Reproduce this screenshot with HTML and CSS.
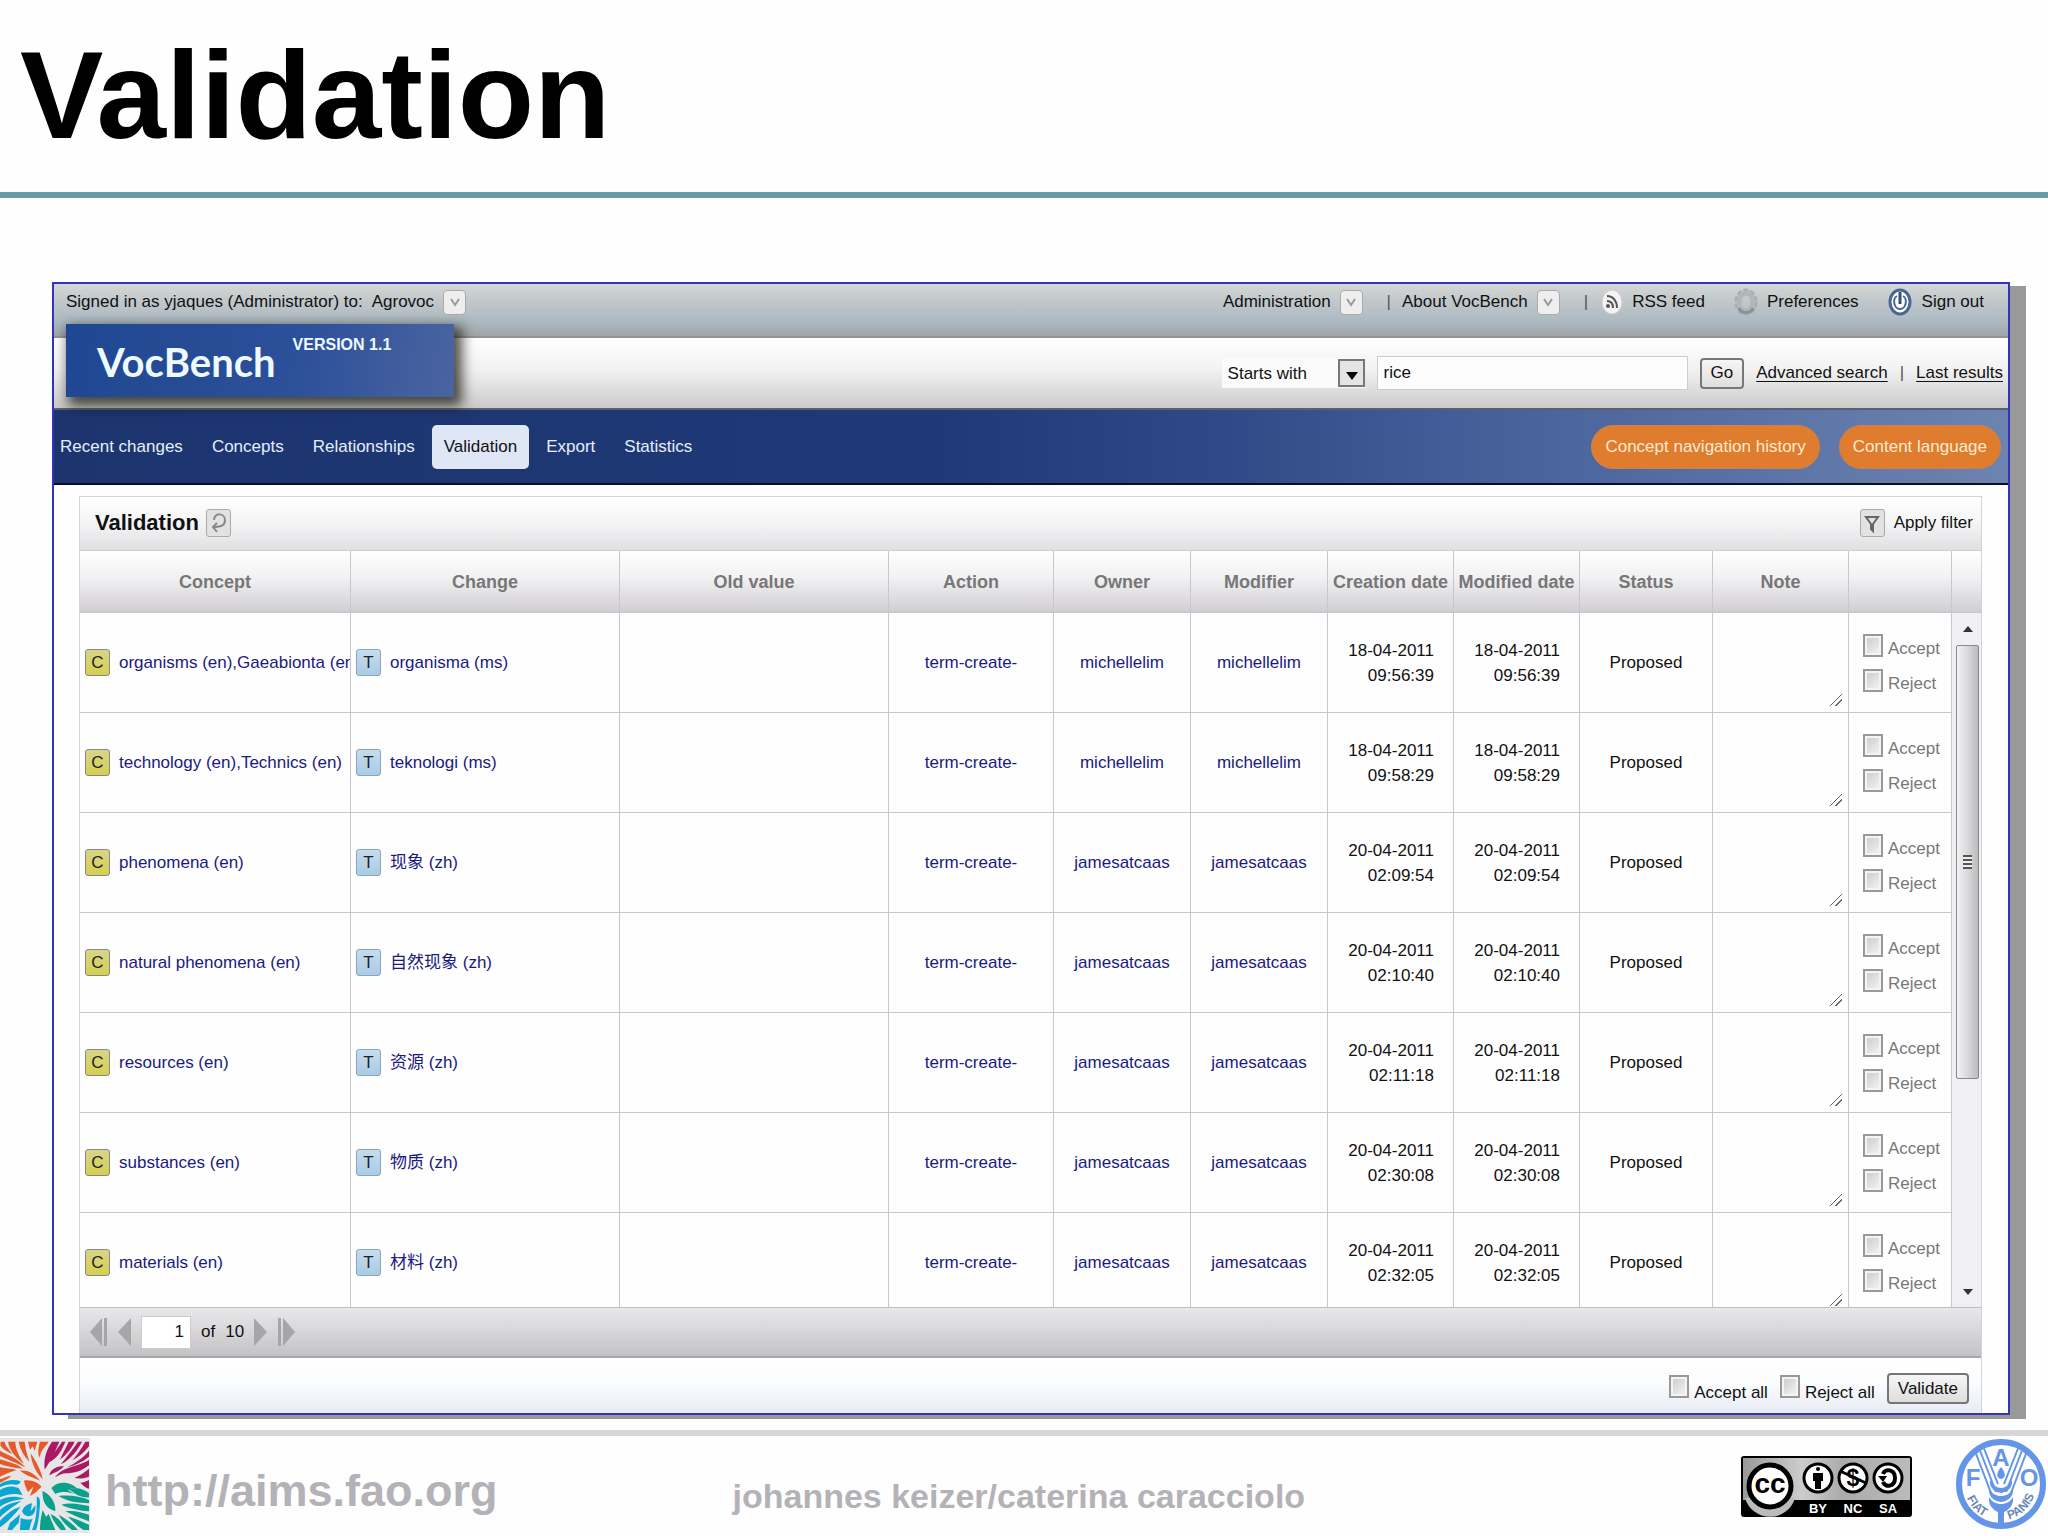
FILE: index.html
```html
<!DOCTYPE html>
<html lang="en">
<head>
    <meta charset="UTF-8">
    <meta name="viewport" content="width=device-width, initial-scale=1.0">
    <title>Validation</title>
    <link rel="stylesheet" href="styles.css">
</head>
<body>
    <header class="slide-header">
        <h1>Validation</h1>
    </header>

    <main class="window">
        <div class="topbar">
            <div class="signed-in">
                <span>Signed in as yjaques (Administrator) to:</span>
                <span>Agrovoc</span>
                <button class="chevron" aria-label="Choose ontology"><svg viewBox="0 0 10 10"><path d="M1 2l4 6 4-6"/></svg></button>
            </div>
            <div class="top-links">
                <a href="#">Administration</a>
                <button class="chevron" aria-label="Administration menu"><svg viewBox="0 0 10 10"><path d="M1 2l4 6 4-6"/></svg></button>
                <span class="sep">|</span>
                <a href="#">About VocBench</a>
                <button class="chevron" aria-label="About menu"><svg viewBox="0 0 10 10"><path d="M1 2l4 6 4-6"/></svg></button>
                <span class="sep last-sep">|</span>
                <a class="icon-link" href="#">
                    <svg width="22" height="26" viewBox="0 0 22 26">
                        <ellipse cx="11" cy="13" rx="10" ry="12" fill="#f3f3f3" stroke="#cfcfcf"/>
                        <g fill="none" stroke="#555" stroke-width="2"><path d="M6 7c6 0 10 5 10 12M6 12c4 0 6 3 6 7"/></g>
                        <circle cx="7" cy="17" r="2" fill="#555"/>
                    </svg>
                    RSS feed
                </a>
                <a class="icon-link" href="#">
                    <svg width="24" height="28" viewBox="0 0 24 28">
                        <ellipse cx="12" cy="14" rx="10" ry="12" fill="none" stroke="#a9adb0" stroke-width="3" stroke-dasharray="5 2"/>
                        <ellipse cx="12" cy="14" rx="7" ry="9" fill="none" stroke="#b4b7b9" stroke-width="5"/>
                        <path d="M5 20c2 6 12 6 14 0" fill="none" stroke="#8d9194" stroke-width="3"/>
                    </svg>
                    Preferences
                </a>
                <a class="icon-link" href="#">
                    <svg width="25" height="28" viewBox="0 0 25 28">
                        <ellipse cx="12" cy="14" rx="10" ry="12" fill="#fff" stroke="#4a6792" stroke-width="3"/>
                        <path d="M9 8C4 11 6 21 12 21S20 11 15 8" fill="none" stroke="#4a6792" stroke-width="2"/>
                        <path d="M12 4v12" stroke="#2f4f80" stroke-width="3"/>
                    </svg>
                    Sign out
                </a>
            </div>
        </div>

        <div class="search-row">
            <div class="logo"><strong>VocBench</strong><span>VERSION 1.1</span></div>
            <form class="search">
                <div class="select-box">
                    <select aria-label="Match type"><option>Starts with</option></select>
                    <span class="select-arrow"></span>
                </div>
                <input type="text" value="rice" aria-label="Search text">
                <button type="button" class="btn">Go</button>
                <a href="#">Advanced search</a>
                <span class="sep">|</span>
                <a href="#">Last results</a>
            </form>
        </div>

        <nav class="menu">
            <a href="#">Recent changes</a>
            <a href="#">Concepts</a>
            <a href="#">Relationships</a>
            <a href="#" class="active">Validation</a>
            <a href="#">Export</a>
            <a href="#">Statistics</a>
            <div class="menu-right">
                <button class="pill">Concept navigation history</button>
                <button class="pill">Content language</button>
            </div>
        </nav>

        <section class="panel">
            <div class="panel-title">
                <h2>Validation</h2>
                <button class="icon-btn" aria-label="Reload">
                    <svg width="18" height="22" viewBox="0 0 18 22"><path d="M5 8c0-8 11-7 11 0 0 5-3 7-12 7M8 11l-4 4 4 5" fill="none" stroke="#888" stroke-width="2"/></svg>
                </button>
                <div class="filter">
                    <button class="icon-btn" id="filter">
                        <svg width="18" height="22" viewBox="0 0 18 22"><path d="M3 5h12l-5 7v7l-2-2v-5z" fill="none" stroke="#666" stroke-width="2"/></svg>
                    </button>
                    <label for="filter">Apply filter</label>
                </div>
            </div>

            <div class="grid">
                <div class="table-container">
                    <table>
                        <colgroup>
                            <col class="c-concept"><col class="c-wide"><col class="c-wide">
                            <col class="c-action"><col class="c-user"><col class="c-user">
                            <col class="c-date"><col class="c-date"><col class="c-status">
                            <col class="c-note"><col class="c-check">
                        </colgroup>
                        <thead>
                            <tr>
                                <th>Concept</th>
                                <th>Change</th>
                                <th>Old value</th>
                                <th>Action</th>
                                <th>Owner</th>
                                <th>Modifier</th>
                                <th>Creation date</th>
                                <th>Modified date</th>
                                <th>Status</th>
                                <th>Note</th>
                                <th></th>
                            </tr>
                        </thead>
                        <tbody>
                            <tr>
                                <td><div class="term"><i class="tag tag-c">C</i><a href="#">organisms (en),Gaeabionta (en)</a></div></td>
                                <td><div class="term"><i class="tag tag-t">T</i><a href="#">organisma (ms)</a></div></td>
                                <td></td>
                                <td class="link">term-create-</td>
                                <td class="link">michellelim</td>
                                <td class="link">michellelim</td>
                                <td class="date">18-04-2011<br>09:56:39</td>
                                <td class="date">18-04-2011<br>09:56:39</td>
                                <td>Proposed</td>
                                <td class="note"><textarea aria-label="Note"></textarea></td>
                                <td class="checks"><label><input type="checkbox">Accept</label><label><input type="checkbox">Reject</label></td>
                            </tr>
                            <tr>
                                <td><div class="term"><i class="tag tag-c">C</i><a href="#">technology (en),Technics (en)</a></div></td>
                                <td><div class="term"><i class="tag tag-t">T</i><a href="#">teknologi (ms)</a></div></td>
                                <td></td>
                                <td class="link">term-create-</td>
                                <td class="link">michellelim</td>
                                <td class="link">michellelim</td>
                                <td class="date">18-04-2011<br>09:58:29</td>
                                <td class="date">18-04-2011<br>09:58:29</td>
                                <td>Proposed</td>
                                <td class="note"><textarea aria-label="Note"></textarea></td>
                                <td class="checks"><label><input type="checkbox">Accept</label><label><input type="checkbox">Reject</label></td>
                            </tr>
                            <tr>
                                <td><div class="term"><i class="tag tag-c">C</i><a href="#">phenomena (en)</a></div></td>
                                <td><div class="term"><i class="tag tag-t">T</i><a href="#">现象 (zh)</a></div></td>
                                <td></td>
                                <td class="link">term-create-</td>
                                <td class="link">jamesatcaas</td>
                                <td class="link">jamesatcaas</td>
                                <td class="date">20-04-2011<br>02:09:54</td>
                                <td class="date">20-04-2011<br>02:09:54</td>
                                <td>Proposed</td>
                                <td class="note"><textarea aria-label="Note"></textarea></td>
                                <td class="checks"><label><input type="checkbox">Accept</label><label><input type="checkbox">Reject</label></td>
                            </tr>
                            <tr>
                                <td><div class="term"><i class="tag tag-c">C</i><a href="#">natural phenomena (en)</a></div></td>
                                <td><div class="term"><i class="tag tag-t">T</i><a href="#">自然现象 (zh)</a></div></td>
                                <td></td>
                                <td class="link">term-create-</td>
                                <td class="link">jamesatcaas</td>
                                <td class="link">jamesatcaas</td>
                                <td class="date">20-04-2011<br>02:10:40</td>
                                <td class="date">20-04-2011<br>02:10:40</td>
                                <td>Proposed</td>
                                <td class="note"><textarea aria-label="Note"></textarea></td>
                                <td class="checks"><label><input type="checkbox">Accept</label><label><input type="checkbox">Reject</label></td>
                            </tr>
                            <tr>
                                <td><div class="term"><i class="tag tag-c">C</i><a href="#">resources (en)</a></div></td>
                                <td><div class="term"><i class="tag tag-t">T</i><a href="#">资源 (zh)</a></div></td>
                                <td></td>
                                <td class="link">term-create-</td>
                                <td class="link">jamesatcaas</td>
                                <td class="link">jamesatcaas</td>
                                <td class="date">20-04-2011<br>02:11:18</td>
                                <td class="date">20-04-2011<br>02:11:18</td>
                                <td>Proposed</td>
                                <td class="note"><textarea aria-label="Note"></textarea></td>
                                <td class="checks"><label><input type="checkbox">Accept</label><label><input type="checkbox">Reject</label></td>
                            </tr>
                            <tr>
                                <td><div class="term"><i class="tag tag-c">C</i><a href="#">substances (en)</a></div></td>
                                <td><div class="term"><i class="tag tag-t">T</i><a href="#">物质 (zh)</a></div></td>
                                <td></td>
                                <td class="link">term-create-</td>
                                <td class="link">jamesatcaas</td>
                                <td class="link">jamesatcaas</td>
                                <td class="date">20-04-2011<br>02:30:08</td>
                                <td class="date">20-04-2011<br>02:30:08</td>
                                <td>Proposed</td>
                                <td class="note"><textarea aria-label="Note"></textarea></td>
                                <td class="checks"><label><input type="checkbox">Accept</label><label><input type="checkbox">Reject</label></td>
                            </tr>
                            <tr>
                                <td><div class="term"><i class="tag tag-c">C</i><a href="#">materials (en)</a></div></td>
                                <td><div class="term"><i class="tag tag-t">T</i><a href="#">材料 (zh)</a></div></td>
                                <td></td>
                                <td class="link">term-create-</td>
                                <td class="link">jamesatcaas</td>
                                <td class="link">jamesatcaas</td>
                                <td class="date">20-04-2011<br>02:32:05</td>
                                <td class="date">20-04-2011<br>02:32:05</td>
                                <td>Proposed</td>
                                <td class="note"><textarea aria-label="Note"></textarea></td>
                                <td class="checks"><label><input type="checkbox">Accept</label><label><input type="checkbox">Reject</label></td>
                            </tr>
                        </tbody>
                    </table>
                </div>
                <div class="scroll">
                    <div class="scroll-head"></div>
                    <div class="track">
                        <span class="arrow-up"></span>
                        <div class="thumb"><span class="grip"></span></div>
                        <span class="arrow-down"></span>
                    </div>
                </div>
            </div>

            <div class="pager">
                <button aria-label="First page"><svg width="18" height="28" viewBox="0 0 18 28"><path d="M12 0v28L0 14zM14 0h3v28h-3z"/></svg></button>
                <button aria-label="Previous page"><svg width="13" height="28" viewBox="0 0 13 28"><path d="M13 0v28L0 14z"/></svg></button>
                <input type="text" value="1" aria-label="Page">
                <span class="of"><span>of</span><span>10</span></span>
                <button aria-label="Next page"><svg width="13" height="28" viewBox="0 0 13 28"><path d="M0 0v28l13-14z"/></svg></button>
                <button aria-label="Last page"><svg width="18" height="28" viewBox="0 0 18 28"><path d="M6 0v28l12-14zM1 0h3v28H1z"/></svg></button>
            </div>

            <div class="actions">
                <label><input type="checkbox">Accept all</label>
                <label><input type="checkbox">Reject all</label>
                <button class="btn">Validate</button>
            </div>
        </section>
    </main>

    <footer class="slide-footer">
        <svg class="aims" viewBox="0 24 270 285" aria-label="AIMS">
            <path fill="#e6e6e6" d="M0 24h270v285H0z"/>
            <g fill="#e8592a">
                <path d="M2 35h12c2 14 16 26 24 38C22 66 6 56 1 46z"/>
                <path d="M24 35h22c0 22 12 44 26 66C50 86 28 62 24 35z"/>
                <path d="M56 35h18l4 26 10 34C70 76 60 56 56 35z"/>
                <path d="M84 35h28l-8 28-6-14-8 10z"/>
                <path d="M120 35h26c-8 14-22 22-28 48-6-16-2-34 2-48z"/>
                <path d="M92 70c10 16 30 44 36 78-18-18-34-46-36-78z"/>
                <path d="M0 62c24 14 54 22 76 50C48 98 20 88 0 78z"/>
                <path d="M0 88c28 8 52 14 68 28-24-2-48-6-68-14z"/>
                <path d="M0 112c20 4 34 4 50 8-18 6-34 12-50 20z"/>
                <path d="M60 122c24-4 46 10 60 30-20-10-40-14-60-30zM0 148c12-4 22-10 34-10-10 8-20 14-34 20z"/>
                <path d="M72 152c20-4 44 6 52 18-10 12-22 22-34 28l10-28-16 16c-6-12-10-22-12-34z"/>
            </g>
            <g fill="#aa1a63">
                <path d="M156 35h22l-14 32 22-32h10c-10 24-20 46-48 62l-14 22c-4-36 6-60 22-84z"/>
                <path d="M206 35h18c-10 22-22 36-44 54 8-20 18-36 26-54z"/>
                <path d="M234 35h12c-12 24-34 54-64 68 16-20 36-44 52-68z"/>
                <path d="M256 35h11v14c-14 18-30 32-50 42 16-18 26-34 39-56z"/>
                <path d="M148 136c4-20 24-28 44-28-10 14-26 18-44 28z"/>
                <path d="M267 62v18c-20 16-42 26-66 32 24-12 48-28 66-50z"/>
                <path d="M267 90v16c-24 18-44 24-68 24-12 0-22 6-34 12 24-34 66-30 102-52z"/>
                <path d="M267 116v24c-16 6-28 6-44 4 16-8 30-16 44-28z"/>
                <path d="M267 150v26c-10-2-18-10-26-18 10 0 18-4 26-8z"/>
            </g>
            <g fill="#08a6d0">
                <path d="M0 162c20-12 42-16 62-8-2 8-8 10-14 10-16-4-32 0-48 8z"/>
                <path d="M0 180c18-12 36-14 56-6 6 10 8 16 12 22-24-8-46-4-68 6z"/>
                <path d="M0 210c24-12 48-12 72-4-20 4-48 6-72 24z"/>
                <path d="M0 240c18-16 40-24 64-26-20 12-40 26-64 48z"/>
                <path d="M0 272c20-20 38-36 62-42-18 24-40 46-62 62z"/>
                <path d="M30 278c10-8 20-16 30-26l-4 26-20 22H22z"/>
                <path d="M66 244c6-16 18-22 30-24l-4 24 14-18c2 16-4 30-16 32-12 2-20-4-24-14z"/>
                <path d="M62 264c16 6 28 6 36 2-6 14-8 22-10 34H60z"/>
                <path d="M110 200c8 0 10 8 10 20-2 34-4 56-12 80H96c12-28 16-60 14-100z"/>
            </g>
            <g fill="#0aa08c">
                <path d="M154 174c20-24 60-20 80 4-14-4-22-2-30 2l18 12c-22-8-38-8-56 0z"/>
                <path d="M128 182c22 12 40 34 38 62-28-10-40-28-38-62z"/>
                <path d="M206 178c24-8 46-2 61 12v12c-24 2-42-10-61-24z"/>
                <path d="M176 198c34-4 66 2 91 12v10c-34-2-64-4-91-22z"/>
                <path d="M184 224c30-8 60 0 83 4v16c-32-4-60-8-83-20z"/>
                <path d="M196 244c28-4 50 4 71 10v20c-24-8-48-18-71-30z"/>
                <path d="M204 260c26 6 44 16 63 24v16h-16c-18-10-32-26-47-40z"/>
                <path d="M176 254c22 12 44 28 58 46h-18c-14-10-28-24-40-46z"/>
                <path d="M120 300c0-28 4-44 8-60l10 20 8-8 20 48z"/>
                <path d="M152 252c22 10 36 26 46 48h-16c-12-14-24-28-30-48z"/>
            </g>
        </svg>
        <a class="site" href="#">http://aims.fao.org</a>
        <p class="authors">johannes keizer/caterina caracciolo</p>
        <svg class="cc" viewBox="0 0 171 61" aria-label="Creative Commons BY NC SA">
            <defs>
                <linearGradient id="ccbg" x1="0" x2="1"><stop offset="0" stop-color="#999"/><stop offset=".35" stop-color="#ccc"/><stop offset=".6" stop-color="#aaa"/><stop offset="1" stop-color="#bbb"/></linearGradient>
            </defs>
            <rect width="171" height="61" rx="3" fill="#000"/>
            <path d="M2 2h167v42H2z" fill="url(#ccbg)"/>
            <path d="M4 42a26 26 0 0 0 50 0z" fill="#bbb"/>
            <circle cx="29" cy="30" r="21" fill="#fff" stroke="#000" stroke-width="5"/>
            <text class="cc-letters" x="29" y="37" text-anchor="middle">cc</text>
            <g fill="#fff" stroke="#000" stroke-width="3">
                <circle cx="77" cy="22" r="14"/>
                <circle cx="112" cy="22" r="14"/>
                <circle cx="147" cy="22" r="14"/>
            </g>
            <circle cx="77" cy="13" r="2"/>
            <path d="M72 17h10v8h-2v8h-6v-8h-2z"/>
            <text class="cc-sign" x="112" y="30" text-anchor="middle">$</text>
            <path d="M99 15l26 12" stroke="#000" stroke-width="3"/>
            <path d="M142 18c2-6 12-5 12 4s-10 10-12 4" fill="none" stroke="#000" stroke-width="4"/>
            <path d="M137 20h9l-4 6z"/>
            <g class="cc-label">
                <text x="77" y="57" text-anchor="middle">BY</text>
                <text x="112" y="57" text-anchor="middle">NC</text>
                <text x="147" y="57" text-anchor="middle">SA</text>
            </g>
        </svg>
        <svg class="fao" viewBox="0 0 92 92" aria-label="FAO Fiat Panis">
            <circle cx="46" cy="46" r="42" fill="#fff" stroke="#6495e8" stroke-width="6"/>
            <g fill="none" stroke="#6495e8" stroke-width="2">
                <path d="M20 13l16 42M24 10l17 44M28 8l15 38M72 13L56 55M68 10L51 54M64 8L49 46"/>
            </g>
            <path fill="#6495e8" d="M46 29c5 6 5 11 0 12-5-1-5-6 0-12z"/>
            <path fill="#6495e8" d="M35 42c3 5 7 8 11 8s8-3 11-8c1 7-4 12-11 13-7-1-12-6-11-13zM34 50c3 6 7 8 12 8s9-2 12-8c1 8-4 13-12 14-8-1-13-6-12-14zM34 59c3 5 7 7 12 7s9-2 12-7c1 8-4 13-9 15v15h-6V74c-5-2-10-7-9-15z"/>
            <g class="fao-letters">
                <text x="18" y="48" text-anchor="middle">F</text>
                <text x="46" y="28" text-anchor="middle">A</text>
                <text x="74" y="48" text-anchor="middle">O</text>
            </g>
            <path id="motto-left" d="M12 60a36 36 0 0 0 29 22" fill="none"/>
            <path id="motto-right" d="M54 81a36 36 0 0 0 27-35" fill="none"/>
            <g class="fao-motto">
                <text><textPath href="#motto-left">FIAT</textPath></text>
                <text><textPath href="#motto-right">PANIS</textPath></text>
            </g>
        </svg>
    </footer>
</body>
</html>
```
FILE: styles.css
```css
* {
    box-sizing: border-box;
}

body {
    margin: 0;
    background: #fefefe;
    font-family: "Liberation Sans", Arial, "Noto Sans CJK SC", sans-serif;
    font-size: 17px;
    color: #111;
}

a {
    color: inherit;
    text-decoration: none;
}

button, input, select, textarea {
    font: inherit;
    color: inherit;
    margin: 0;
}

button {
    cursor: pointer;
}

.slide-header {
    border-bottom: 6px solid #6a9ca8;
    padding: 0 20px 2px;
}

.slide-header h1 {
    margin: 0;
    font-size: 125px;
    line-height: 190px;
    color: #000;
}

/* application window */
.window {
    margin: 84px 38px 0 52px;
    border: 2px solid #3333bb;
    box-shadow: 16px 4px 0 #999;
    background: #fefefe;
}

.topbar {
    display: flex;
    justify-content: space-between;
    height: 54px;
    padding: 0 24px 16px 12px;
    background: linear-gradient(#d4d7d7, #c3c9cb 30%, #adbac2 70%, #a0a6a8);
    border-bottom: 2px solid #8e9496;
}

.signed-in, .top-links, .icon-link {
    display: flex;
    align-items: center;
    gap: 9px;
}

.chevron {
    display: flex;
    align-items: center;
    justify-content: center;
    width: 23px;
    height: 25px;
    padding: 0;
    border: 1px solid #aaa;
    border-radius: 4px;
    background: #eee;
}

.chevron svg {
    width: 10px;
    height: 10px;
    fill: none;
    stroke: #999;
    stroke-width: 2;
}

.sep {
    color: #555;
}

.top-links .sep {
    margin: 0 2px 0 15px;
}

.top-links .last-sep {
    margin-right: 4px;
}

.icon-link + .icon-link {
    margin-left: 20px;
}

.search-row {
    position: relative;
    display: flex;
    justify-content: flex-end;
    align-items: center;
    height: 70px;
    padding-right: 5px;
    background: linear-gradient(#fff, #f2f2f2 45%, #cbcbcb);
}

.logo {
    position: absolute;
    left: 12px;
    top: -14px;
    display: flex;
    gap: 17px;
    width: 388px;
    height: 73px;
    padding-left: 31px;
    background: linear-gradient(100deg, #1f4791, #2d509a 60%, #4a64a0);
    box-shadow: 5px 6px 12px 3px rgba(20, 20, 10, 0.75);
    color: #eefaff;
}

.logo strong {
    font-family: Lato, sans-serif;
    font-size: 40px;
    line-height: 76px;
}

.logo span {
    font-size: 16px;
    font-weight: bold;
    line-height: 42px;
}

.search {
    display: flex;
    align-items: center;
    gap: 12px;
}

.search a {
    text-decoration: underline;
    text-underline-offset: 3px;
}

.select-box {
    position: relative;
    width: 143px;
}

.select-box select {
    appearance: none;
    width: 100%;
    height: 30px;
    padding: 0 6px;
    border: 0;
    border-radius: 0;
    background: #fbfbfb;
}

.select-arrow {
    position: absolute;
    right: 0;
    top: 1px;
    width: 27px;
    height: 28px;
    border: 2px solid #777;
    background: #e4e4e4;
    pointer-events: none;
}

.select-arrow::after {
    content: "";
    position: absolute;
    left: 6px;
    top: 11px;
    border: 6px solid transparent;
    border-top: 8px solid #000;
    border-bottom: 0;
}

.search input {
    width: 311px;
    height: 34px;
    padding: 0 6px;
    border: 1px solid #ccc;
    background: #fcfcfc;
}

.btn {
    height: 31px;
    padding: 0 9px;
    border: 2px solid #777;
    border-radius: 4px;
    background: linear-gradient(#f6f6f6, #dedede);
}

.menu {
    display: flex;
    align-items: center;
    gap: 5px;
    height: 77px;
    padding: 1px 7px 0 6px;
    background: linear-gradient(90deg, #1c356f 0, #1f3977 45%, #2f4a86 60%, #48639c 75%, #6d83b0 100%);
    border-top: 2px solid #5a6070;
    border-bottom: 2px solid #0c0c28;
    color: #e6eefa;
}

.menu a {
    padding: 0 12px;
    line-height: 44px;
    border-radius: 5px;
}

.menu a:first-child {
    padding-left: 0;
}

.menu a.active {
    background: #dfe6f6;
    color: #111;
}

.menu-right {
    display: flex;
    gap: 19px;
    margin-left: auto;
}

.pill {
    height: 44px;
    padding: 0 13px;
    border: 1px solid #c98250;
    border-radius: 22px;
    background: #e07c2e;
    color: #fdebcf;
}

/* validation panel */
.panel {
    margin: 11px 26px 0 25px;
    border: 1px solid #d3d3d8;
    border-bottom: 0;
}

.panel-title {
    display: flex;
    align-items: center;
    gap: 7px;
    height: 54px;
    padding: 0 8px 2px 15px;
    border-bottom: 1px solid #d0d0d4;
    background: linear-gradient(#fff, #f4f4f5 50%, #e0dfe2);
}

.panel-title h2 {
    margin: 0;
    font-size: 22px;
}

.icon-btn {
    display: flex;
    align-items: center;
    justify-content: center;
    width: 25px;
    height: 28px;
    padding: 0;
    border: 1px solid #aaa;
    border-radius: 3px;
    background: #e2e2e2;
}

.filter {
    display: flex;
    align-items: center;
    gap: 9px;
    margin-left: auto;
}

/* the last row runs on under the pager */
.grid {
    display: flex;
    height: 756px;
    overflow: hidden;
}

.table-container {
    flex: 1;
}

table {
    width: 100%;
    table-layout: fixed;
    border-collapse: separate;
    border-spacing: 0;
}

.c-concept { width: 271px; }
.c-wide { width: 269px; }
.c-action { width: 165px; }
.c-user { width: 137px; }
.c-date { width: 126px; }
.c-status { width: 133px; }
.c-note { width: 136px; }
.c-check { width: 103px; }

th, td {
    padding: 0;
    border-right: 1px solid #c9c6cd;
    border-bottom: 1px solid #c9c6cd;
    text-align: center;
    overflow: hidden;
    white-space: nowrap;
}

th {
    height: 62px;
    padding-top: 2px;
    font-size: 18px;
    color: #777;
    background: linear-gradient(#fff, #f1f0f2 45%, #d0ced2);
}

td {
    height: 100px;
}

.term {
    display: flex;
    align-items: center;
    gap: 9px;
    padding-left: 5px;
    line-height: 20px;
    color: #1a1a80;
}

.tag {
    flex: none;
    width: 25px;
    height: 27px;
    border: 1px solid #888;
    border-radius: 3px;
    font-style: normal;
    line-height: 26px;
    text-align: center;
    color: #222;
}

.tag-c {
    background: linear-gradient(#d8d48a, #d5d04e);
}

.tag-t {
    background: linear-gradient(#c6dcec, #a9cbe6);
    border-color: #8aa4b8;
}

.link {
    color: #1a1a80;
}

td.date {
    padding-right: 19px;
    text-align: right;
    line-height: 25px;
}

td.note {
    padding-right: 6px;
}

.note textarea {
    display: block;
    width: 100%;
    height: 86px;
    border: 0;
    background: transparent;
    resize: both;
}

.note textarea::-webkit-resizer {
    background: linear-gradient(135deg, transparent 46%, #666 46%, #666 53%, transparent 53%, transparent 70%, #666 70%, #666 77%, transparent 77%) right bottom / 12px 12px no-repeat;
}

input[type="checkbox"] {
    appearance: none;
    width: 20px;
    height: 23px;
    border: 2px solid #999;
    background: linear-gradient(135deg, #c9c9c9, #f6f6f6);
    box-shadow: inset 0 0 0 2px #f4f4f4;
}

.checks label {
    display: flex;
    align-items: flex-start;
    gap: 5px;
    height: 35px;
    padding: 6px 0 0 14px;
    line-height: 30px;
    color: #777;
}

.scroll {
    flex: none;
    display: flex;
    flex-direction: column;
    width: 31px;
}

.scroll-head {
    height: 62px;
    border-bottom: 1px solid #c9c6cd;
    background: linear-gradient(#fff, #f1f0f2 45%, #d0ced2);
}

.track {
    flex: 1;
    display: flex;
    flex-direction: column;
    align-items: center;
    padding: 13px 0 12px;
    background: #f0eff2;
}

.arrow-up, .arrow-down {
    border: 5px solid transparent;
}

.arrow-up {
    border-top: 0;
    border-bottom: 6px solid #333;
}

.arrow-down {
    margin-top: auto;
    border-bottom: 0;
    border-top: 6px solid #333;
}

.thumb {
    display: flex;
    align-items: center;
    justify-content: center;
    width: 23px;
    height: 434px;
    margin-top: 13px;
    border: 1px solid #888;
    border-radius: 2px;
    background: linear-gradient(90deg, #f2f2f4, #d4d4d8 60%, #bbb);
}

.grip {
    width: 9px;
    height: 14px;
    background: repeating-linear-gradient(#555 0, #555 2px, #eee 2px, #eee 4px);
}

.pager {
    display: flex;
    align-items: center;
    gap: 10px;
    height: 51px;
    padding: 0 10px;
    border-top: 1px solid #bfbdc2;
    border-bottom: 2px solid #a8a6aa;
    background: linear-gradient(#e8e7ea, #dad9dc 40%, #c4c2c5);
}

.pager button {
    display: flex;
    padding: 0;
    border: 0;
    background: none;
    fill: #a6a6a8;
}

.pager input {
    width: 50px;
    height: 33px;
    padding: 0 6px;
    border: 1px solid #ccc;
    background: #fff;
    text-align: right;
}

.pager .of {
    display: flex;
    gap: 10px;
}

.actions {
    display: flex;
    align-items: center;
    justify-content: flex-end;
    gap: 12px;
    height: 55px;
    padding: 6px 12px 0;
    background: linear-gradient(#fff, #fbfcfe 45%, #e8ebf5);
}

.actions label {
    display: flex;
    align-items: baseline;
    gap: 5px;
}

/* slide footer */
.slide-footer {
    display: flex;
    align-items: flex-start;
    margin-top: 15px;
    border-top: 6px solid #d6d6d6;
    padding-top: 2px;
    font-weight: bold;
    color: #b3b2b6;
}

.aims {
    width: 90px;
    height: 95px;
}

.site {
    margin-left: 15px;
    font-size: 45px;
    line-height: 106px;
}

.authors {
    margin: 0 auto 0 235px;
    font-size: 34px;
    line-height: 116px;
}

.cc {
    width: 171px;
    height: 61px;
    margin: 18px 43px 0 0;
}

.cc-letters {
    font-size: 28px;
    font-weight: bold;
    fill: #000;
}

.cc-sign {
    font-size: 23px;
    fill: #000;
}

.cc-label {
    font-size: 13px;
    fill: #fff;
}

.fao {
    width: 92px;
    height: 92px;
    margin-right: 1px;
}

.fao-letters {
    font-size: 24px;
    fill: #6495e8;
}

.fao-motto {
    font-size: 12px;
    fill: #6a85b8;
}
```
